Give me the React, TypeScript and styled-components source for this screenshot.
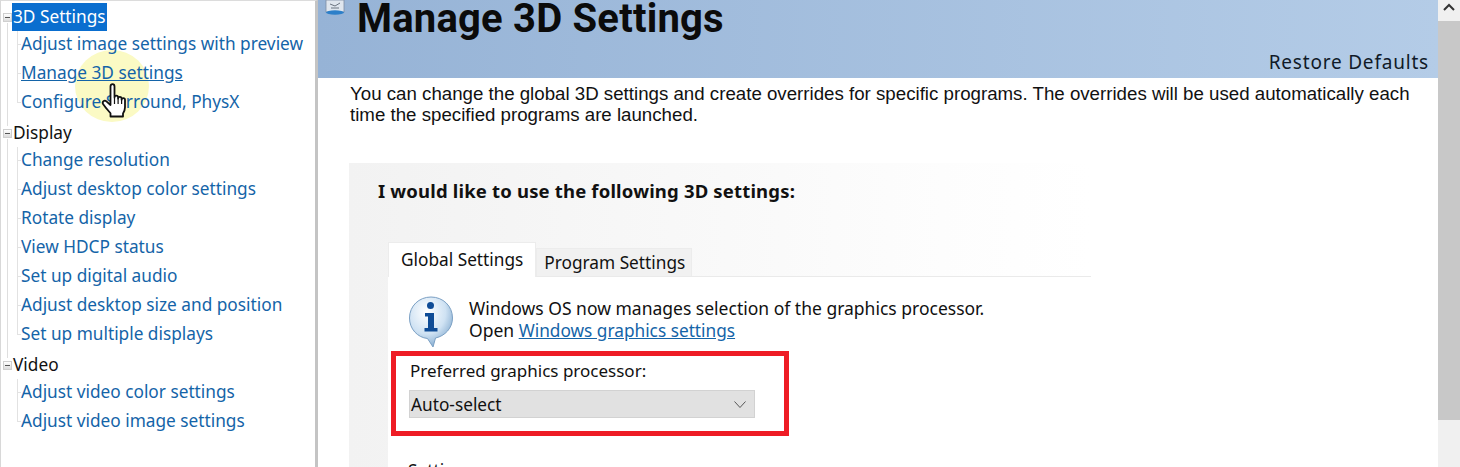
import styled, { createGlobalStyle } from 'styled-components'

const GlobalStyle = createGlobalStyle`
  html, body {
    margin: 0;
    height: 100%;
    overflow: hidden;
    background: #fff;
  }
  #root {
    height: 100%;
  }
`

const Window = styled.div`
  display: flex;
  height: 467px;
  width: 1460px;
  overflow: hidden;
  font-family: "Noto Sans", sans-serif;
  color: #111;
`

const Sidebar = styled.nav`
  position: relative;
  width: 318px;
  flex: none;
  box-sizing: border-box;
  padding: 4px 0 0 1px;
  border-left: 1px solid #d8d8d8;
  border-top: 1px solid #dcdcdc;
  border-right: 3px solid #c4c4c4;
`

const Group = styled.div<{ $last?: boolean }>`
  position: relative;
  margin-bottom: 5px;

  &::before {
    content: '';
    display: ${props => (props.$last ? 'none' : 'block')};
    position: absolute;
    left: 5px;
    top: 18px;
    bottom: -10px;
    border-left: 1px solid #dedede;
  }
`

const GroupHead = styled.div`
  display: flex;
  align-items: center;
  height: 24px;
  font-size: 17.25px;
  position: relative;
  z-index: 2;
`

const Toggle = styled.span`
  width: 9px;
  height: 9px;
  flex: none;
  margin: 0 0 0 1px;
  box-sizing: border-box;
  border: 1px solid #cfcfcf;
  background: linear-gradient(#fff, #dcdcdc);
  display: flex;
  align-items: center;
  justify-content: center;

  &::before {
    content: '';
    width: 5px;
    height: 1px;
    background: #555;
  }
`

const HeadLabel = styled.span<{ $active?: boolean }>`
  padding: 0 1px;
  line-height: 28px;
  background: ${props => (props.$active ? '#0a6ecf' : 'transparent')};
  color: ${props => (props.$active ? '#fff' : '#111')};
`

const ItemList = styled.div`
  position: relative;

  &::before {
    content: '';
    position: absolute;
    left: 15px;
    top: 2px;
    bottom: 14px;
    border-left: 1px solid #e2e2e2;
  }
`

const ItemRow = styled.div`
  height: 29px;
  display: flex;
  align-items: center;
  padding-left: 19px;
  position: relative;
  z-index: 2;

  &::before {
    content: '';
    position: absolute;
    left: 15px;
    top: 50%;
    width: 4px;
    border-top: 1px solid #e2e2e2;
  }
`

const ItemLink = styled.a<{ $hover?: boolean }>`
  font-size: 17.25px;
  color: #1464a8;
  white-space: nowrap;
  text-decoration: ${props => (props.$hover ? 'underline' : 'none')};
`

const Highlight = styled.div`
  position: absolute;
  left: 74px;
  top: 49px;
  width: 74px;
  height: 72px;
  border-radius: 50%;
  background: #fbfac4;
  z-index: 1;
`

const HandCursor = styled.svg`
  position: absolute;
  left: 100px;
  top: 81px;
  width: 30px;
  height: 37px;
  z-index: 3;
`

const Main = styled.main`
  flex: 1;
  min-width: 0;
  display: flex;
  flex-direction: column;
`

const Banner = styled.header`
  height: 78px;
  flex: none;
  position: relative;
  background: linear-gradient(90deg, #96b3d6, #b4cce7);
  display: flex;
  padding: 0 9px 0 39px;
  box-sizing: border-box;
  justify-content: space-between;
`

const BannerIcon = styled.svg`
  position: absolute;
  left: 5px;
  top: 0;
  width: 24px;
  height: 15px;
`

const Title = styled.h1`
  margin: 0;
  font-family: Roboto, sans-serif;
  font-size: 40px;
  line-height: 37px;
  letter-spacing: 0.2px;
  font-weight: 700;
  color: #0b0b0b;
  white-space: nowrap;
`

const Restore = styled.span`
  align-self: flex-end;
  font-size: 19px;
  line-height: 26px;
  letter-spacing: 0.8px;
  margin-bottom: 3px;
  color: #101a28;
`

const Intro = styled.p`
  margin: 5px 0 0;
  padding: 0 20px 0 32px;
  font-family: "Liberation Sans", Arial, sans-serif;
  font-size: 18.7px;
  line-height: 21px;
  color: #111;
`

const Panel = styled.section`
  margin: 38px 0 0 31px;
  width: 742px;
  flex: 1;
  padding: 15px 0 0 29px;
  box-sizing: border-box;
  background: linear-gradient(90deg, #f2f2f2, #fdfdfd 80%, #fff);
`

const PanelHeading = styled.h2`
  margin: 0;
  font-size: 18.5px;
  line-height: 26px;
  letter-spacing: 0.17px;
  font-weight: 700;
  color: #111;
`

const TabBar = styled.div`
  display: flex;
  align-items: flex-end;
  margin: 38px 0 0 10px;
  height: 34px;
  border-bottom: 1px solid #eaeaea;
`

const Tab = styled.div<{ $active?: boolean }>`
  box-sizing: border-box;
  height: ${props => (props.$active ? '35px' : '28px')};
  margin-bottom: ${props => (props.$active ? '-1px' : '0')};
  padding: ${props => (props.$active ? '0 12px 2px' : '0 6px 0 7px')};
  display: flex;
  align-items: center;
  font-size: 17.25px;
  background: ${props => (props.$active ? '#fff' : '#f1f1f1')};
  border: 1px solid #ececec;
  border-bottom: none;
  white-space: nowrap;
`

const TabBody = styled.div`
  margin-left: 10px;
  background: #fff;
  height: 220px;
  padding: 18px 0 0 20px;
`

const Notice = styled.div`
  display: flex;
  gap: 15px;
  align-items: flex-start;
  font-size: 17.5px;
  line-height: 22px;
`

const InfoIcon = styled.svg`
  width: 46px;
  height: 52px;
  flex: none;
  margin-top: 1px;
`

const NoticeText = styled.div`
  padding-top: 2px;
`

const NoticeLink = styled.a`
  font-size: 17.25px;
  color: #1464a8;
  text-decoration: underline;
`

const Callout = styled.div`
  box-sizing: border-box;
  width: 398px;
  height: 85px;
  margin: 3px 0 0 -17px;
  border: 5px solid #ee1c25;
  padding: 3px 0 0 14px;
`

const FieldLabel = styled.div`
  font-size: 17px;
  line-height: 24px;
`

const Combo = styled.div`
  box-sizing: border-box;
  width: 346px;
  height: 28px;
  margin: 7px 0 0 -1px;
  padding: 1px 8px 0 1px;
  background: #e1e1e1;
  border: 1px solid #d2d2d2;
  display: flex;
  align-items: center;
  justify-content: space-between;
  font-size: 17.25px;
`

const Clipped = styled.div`
  margin-top: 23px;
  font-size: 17.25px;
  line-height: 24px;
`

const Scrollbar = styled.div`
  width: 22px;
  flex: none;
  display: flex;
  flex-direction: column;
  background: #f0f0f0;
`

const ScrollButton = styled.div`
  height: 21px;
  flex: none;
  background: #f0f0f0;
  display: flex;
  justify-content: center;
  padding-top: 3px;
  box-sizing: border-box;
`

const ScrollThumb = styled.div`
  height: 399px;
  background: #c8c8c8;
`

const tree = [
  {
    name: '3D Settings',
    active: true,
    items: ['Adjust image settings with preview', 'Manage 3D settings', 'Configure Surround, PhysX'],
  },
  {
    name: 'Display',
    items: [
      'Change resolution',
      'Adjust desktop color settings',
      'Rotate display',
      'View HDCP status',
      'Set up digital audio',
      'Adjust desktop size and position',
      'Set up multiple displays',
    ],
  },
  {
    name: 'Video',
    items: ['Adjust video color settings', 'Adjust video image settings'],
  },
]

const App = () => {
  return (
    <>
      <GlobalStyle />
      <Window>
        <Sidebar>
          <Highlight />
          {tree.map((group, i) => (
            <Group key={group.name} $last={i === tree.length - 1}>
              <GroupHead>
                <Toggle />
                <HeadLabel $active={group.active}>{group.name}</HeadLabel>
              </GroupHead>
              <ItemList>
                {group.items.map(item => (
                  <ItemRow key={item}>
                    <ItemLink $hover={item === 'Manage 3D settings'}>{item}</ItemLink>
                  </ItemRow>
                ))}
              </ItemList>
            </Group>
          ))}
          <HandCursor viewBox="0 0 30 37">
            <path
              d="M9.5 4.5c0-3.2 4-3.2 4 0v11c0-2.4 3.6-2.4 3.6 0v1c0-2.300 3.500-2.300 3.500 0v1.200c0-2.200 3.400-2.200 3.400 0v7.500c0 2.800-.8 4.500-2 6.300v3H9.500v-3.200C7.600 29 4.400 25.400 2.200 22.200c-1.600-2.400 1.200-4.600 3.200-2.800l4.100 3.600z"
              fill="#fff"
              stroke="#111"
              strokeWidth="1.8"
              strokeLinejoin="round"
            />
            <path d="M13.500 16v6M17.100 16.500V22M20.600 17.200V22" stroke="#111" strokeWidth="1.200" fill="none" />
          </HandCursor>
        </Sidebar>
        <Main>
          <Banner>
            <BannerIcon viewBox="0 0 24 15">
              <rect x="3" y="0" width="18" height="12" fill="#dfe6ee" stroke="#7d8da3" strokeWidth="0.8" />
              <path d="M7 4l5 2 5-3M8 8h8" stroke="#6b7480" strokeWidth="1" fill="none" />
              <ellipse cx="12" cy="12.500" rx="9" ry="2.200" fill="#2c7fc9" />
            </BannerIcon>
            <Title>Manage 3D Settings</Title>
            <Restore>Restore Defaults</Restore>
          </Banner>
          <Intro>
            You can change the global 3D settings and create overrides for specific programs. The overrides will be used automatically each time the specified programs are launched.
          </Intro>
          <Panel>
            <PanelHeading>I would like to use the following 3D settings:</PanelHeading>
            <TabBar>
              <Tab $active>Global Settings</Tab>
              <Tab>Program Settings</Tab>
            </TabBar>
            <TabBody>
              <Notice>
                <InfoIcon viewBox="0 0 46 52">
                  <defs>
                    <radialGradient id="bubble" cx="0.4" cy="0.3" r="0.8">
                      <stop offset="0" stopColor="#ffffff" />
                      <stop offset="0.55" stopColor="#cfe2f3" />
                      <stop offset="1" stopColor="#6f9cc6" />
                    </radialGradient>
                  </defs>
                  <path
                    d="M23 1C11 1 1.500 10 1.500 22c0 11 8 19.500 18 20.500L25 51l2.500-9C37 40 44.500 32 44.500 22 44.500 10 35 1 23 1z"
                    fill="url(#bubble)"
                    stroke="#7ba0c4"
                  />
                  <circle cx="22.500" cy="9.500" r="3.500" fill="#0f4c96" />
                  <path d="M17 17h9v15h3.500v3.500h-13V32H20V20.500h-3z" fill="#0f4c96" />
                </InfoIcon>
                <NoticeText>
                  Windows OS now manages selection of the graphics processor.
                  <br />
                  Open <NoticeLink>Windows graphics settings</NoticeLink>
                </NoticeText>
              </Notice>
              <Callout>
                <FieldLabel>Preferred graphics processor:</FieldLabel>
                <Combo>
                  Auto-select
                  <svg width="12" height="7" viewBox="0 0 12 7">
                    <path d="M.5.5 6 6.500 11.500.5" stroke="#555" fill="none" />
                  </svg>
                </Combo>
              </Callout>
              <Clipped>Settings:</Clipped>
            </TabBody>
          </Panel>
        </Main>
        <Scrollbar>
          <ScrollButton>
            <svg width="12" height="8" viewBox="0 0 12 8">
              <path d="M1 7 6 2l5 5" stroke="#333" strokeWidth="2" fill="none" />
            </svg>
          </ScrollButton>
          <ScrollThumb />
        </Scrollbar>
      </Window>
    </>
  )
}

export default App
